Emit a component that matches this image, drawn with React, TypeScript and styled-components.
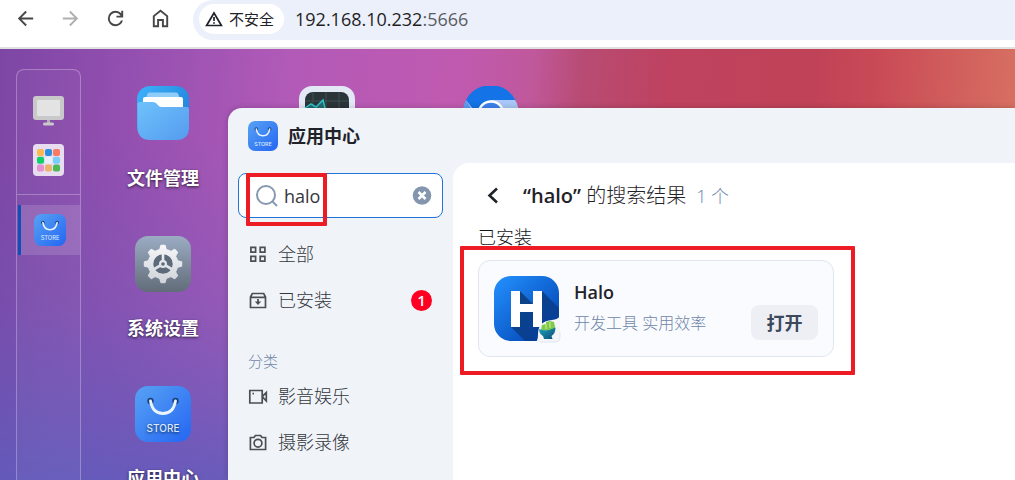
import React, { useState } from "react";
import styled, { createGlobalStyle } from "styled-components";

const GlobalStyle = createGlobalStyle`
  *, *::before, *::after { box-sizing: border-box; }
  body {
    margin: 0;
    color: #1f2329;
    font-family: "Open Sans", "Noto Sans CJK SC", sans-serif;
    font-size: 18px;
    line-height: 24px;
  }
  button, input { font: inherit; color: inherit; }
  button { border: 0; padding: 0; background: none; cursor: pointer; }
  svg { display: block; flex: none; }
`;

const Page = styled.div`
  display: flex;
  flex-direction: column;
  height: 100vh;
  overflow: hidden;
`;

/* Browser toolbar */

const Toolbar = styled.header`
  display: flex;
  align-items: flex-start;
  flex: none;
  height: 49px;
  padding-left: 3px;
  background: #fff;
  border-bottom: 2px solid #dfe2e1;
`;

const ToolButton = styled.button<{ $dim?: boolean }>`
  display: grid;
  place-items: center;
  width: 45px;
  height: 37px;
  color: ${(p) => (p.$dim ? "#b0b0b0" : "#474747")};
`;

const AddressBar = styled.div`
  display: flex;
  align-items: center;
  flex: 1;
  height: 40px;
  margin-left: 10px;
  padding: 0 0 2px 6px;
  gap: 11px;
  background: #ecf0fa;
  border-radius: 20px 0 0 20px;
`;

const SiteChip = styled.button`
  display: flex;
  align-items: center;
  gap: 6px;
  height: 30px;
  padding: 0 10px 0 6px;
  font-size: 15px;
  background: #fff;
  border-radius: 15px;
  white-space: nowrap;
`;

const Url = styled.span`
  color: #1f1f1f;
  span { color: #5a5d63; }
`;

/* Desktop */

const Desktop = styled.main`
  position: relative;
  display: flex;
  flex: 1;
  min-height: 0;
  padding: 20px 0 0 16px;
  overflow: hidden;
  background:
    linear-gradient(180deg, rgba(98, 92, 186, 0) 20%, rgba(98, 92, 186, 0.3) 60%, rgba(94, 92, 188, 0.85) 100%),
    linear-gradient(94deg, #7d46a5 0%, #9450b0 13%, #b25ab8 28%, #c05ab0 44%, #c0589c 51%, #b84b73 56%, #bf4260 64%, #c04257 78%, #c94a56 84%, #d4685f 95%, #da7764 100%);
`;

const Dock = styled.nav`
  display: flex;
  flex-direction: column;
  flex: none;
  width: 65px;
  height: 100%;
  border: 1px solid rgba(255, 255, 255, 0.28);
  border-bottom: 0;
  border-radius: 8px 8px 0 0;
  background: rgba(255, 255, 255, 0.03);
`;

const DockTop = styled.div`
  display: flex;
  flex-direction: column;
  align-items: center;
  gap: 18px;
  padding: 25px 0 18px;
  margin-bottom: 10px;
  border-bottom: 1px solid rgba(255, 255, 255, 0.28);
`;

const DockActive = styled.button`
  display: grid;
  place-items: center;
  height: 50px;
  margin-left: 1px;
  padding-right: 2px;
  border-left: 3px solid #0d50b8;
  background: rgba(255, 255, 255, 0.14);
`;

const Shortcuts = styled.div`
  display: flex;
  padding-top: 17px;
`;

const ShortcutColumn = styled.div`
  width: 164px;
`;

const Shortcut = styled.button`
  display: flex;
  flex-direction: column;
  align-items: center;
  gap: 24px;
  width: 100%;
  height: 150px;
  color: #fff;
  font-weight: 700;
  text-shadow: 0 1px 3px rgba(0, 0, 0, 0.7);
`;

/* Application window */

const Window = styled.section`
  position: absolute;
  top: 59px;
  right: 0;
  bottom: 0;
  left: 228px;
  display: flex;
  flex-direction: column;
  background: #f0f4f9;
  border-radius: 14px 0 0 0;
  box-shadow: 0 0 6px rgba(0, 0, 0, 0.2);
`;

const TitleBar = styled.header`
  display: flex;
  align-items: center;
  gap: 10px;
  height: 55px;
  padding-left: 20px;
`;

const Title = styled.h1`
  margin: 0;
  font-size: 18px;
  font-weight: 700;
`;

const WindowBody = styled.div`
  display: flex;
  flex: 1;
  min-height: 0;
`;

const Sidebar = styled.aside`
  flex: none;
  width: 225px;
  padding: 10px 10px 0;
`;

const SearchBox = styled.label`
  position: relative;
  display: flex;
  align-items: center;
  gap: 6px;
  height: 45px;
  margin-bottom: 13px;
  padding: 0 9px 0 16px;
  background: #fff;
  border: 1px solid #1f74d8;
  border-radius: 8px;
`;

const SearchInput = styled.input`
  flex: 1;
  min-width: 0;
  padding: 0;
  border: 0;
  outline: 0;
  background: none;
  color: #33373d;
`;

const Marker = styled.span`
  position: absolute;
  border: 4px solid #ed1c24;
  border-radius: 1px;
  pointer-events: none;
`;

const SearchMarker = styled(Marker)`
  top: -1px;
  left: 7px;
  width: 81px;
  height: 53px;
`;

const CardMarker = styled(Marker)`
  inset: -15px -22px -19px -19px;
`;

const NavItem = styled.button`
  display: flex;
  align-items: center;
  gap: 10px;
  width: 100%;
  height: 46px;
  padding: 0 11px 0 10px;
  color: #34373c;
  font-weight: 300;
`;

const Badge = styled.span`
  width: 21px;
  height: 21px;
  margin-left: auto;
  border-radius: 50%;
  background: #ff0022;
  color: #fff;
  font-size: 15px;
  font-weight: 600;
  line-height: 21px;
  text-align: center;
`;

const NavHeading = styled.h2`
  margin: 26px 0 0 10px;
  color: #6f86a8;
  font-size: 15px;
  font-weight: 300;
  line-height: 24px;
`;

const Content = styled.div`
  flex: 1;
  min-width: 0;
  padding: 18px 25px 0;
  background: #fff;
  border-radius: 16px 0 0 0;
`;

const ResultHeader = styled.div`
  display: flex;
  align-items: center;
  height: 30px;
  margin-bottom: 14px;
`;

const BackButton = styled.button`
  display: grid;
  place-items: center;
  width: 30px;
  height: 30px;
  margin-right: 15px;
`;

const ResultTitle = styled.h2`
  margin: 0 10px 0 0;
  font-size: 20px;
  font-weight: 300;
  b { font-weight: 600; }
`;

const ResultCount = styled.span`
  color: #7088ac;
  font-weight: 300;
`;

const SectionTitle = styled.h3`
  margin: 0 0 11px;
  color: #111418;
  font-size: 18px;
  font-weight: 300;
`;

const Card = styled.article`
  position: relative;
  display: flex;
  align-items: center;
  gap: 15px;
  width: 356px;
  max-width: 100%;
  padding: 15px;
  background: #fafbfe;
  border: 1px solid #dfe6f0;
  border-radius: 12px;
`;

const CardText = styled.div`
  display: flex;
  flex-direction: column;
  flex: 1;
  gap: 7px;
  padding-bottom: 3px;
  white-space: nowrap;
`;

const AppName = styled.h4`
  margin: 0;
  font-size: 18px;
  font-weight: 600;
`;

const AppTags = styled.p`
  margin: 0;
  color: #6f86a8;
  font-size: 16px;
  font-weight: 300;
`;

const OpenButton = styled.button`
  align-self: flex-end;
  width: 67px;
  height: 35px;
  margin-bottom: 1px;
  border-radius: 8px;
  background: #eeeff4;
  color: #3c485c;
  font-weight: 700;
`;

/* Icons */

const StoreIcon = ({ size }: { size: number }) => (
  <svg width={size} height={size} viewBox="0 0 56 56" aria-hidden="true">
    <defs>
      <linearGradient id={`store${size}`} x1="0" y1="0" x2="1" y2="1">
        <stop offset="0" stopColor="#58a2f4" />
        <stop offset="1" stopColor="#2466f2" />
      </linearGradient>
    </defs>
    <rect width="56" height="56" rx="13" fill={`url(#store${size})`} />
    <circle cx="15.500" cy="15" r="3.200" fill="#17407f" />
    <circle cx="40.500" cy="15" r="3.200" fill="#17407f" />
    <path d="M15.500 15C17 24 22 27.500 28 27.500S39 24 40.500 15" fill="none" stroke="#eaf4ff" strokeWidth="2.800" strokeLinecap="round" />
    <text x="28" y="46" textAnchor="middle" fill="#d9e9ff" fontFamily="Inter, sans-serif" fontSize="10" fontWeight="500">STORE</text>
  </svg>
);

const FolderIcon = () => (
  <svg width="56" height="56" viewBox="0 0 56 56" aria-hidden="true">
    <defs>
      <linearGradient id="folderBack" x1="0" y1="0" x2="1" y2="0.6">
        <stop offset="0" stopColor="#3db2fb" />
        <stop offset="1" stopColor="#2084dc" />
      </linearGradient>
      <linearGradient id="folderFront" x1="0" y1="0" x2="1" y2="1">
        <stop offset="0" stopColor="#6ec2fb" />
        <stop offset="1" stopColor="#559bef" />
      </linearGradient>
    </defs>
    <rect x="2" width="52" height="53" rx="13" fill="url(#folderBack)" />
    <path d="M14 6.500h27q2 0 2.500 2L45 13H11l1-4q.5-2.500 2-2.500z" fill="#8fcdf8" />
    <path d="M10 11h36q2 0 2 2v10H8V13q0-2 2-2z" fill="#fff" />
    <path d="M2.500 18q0-2 2-2H18q2 0 3.500 1.500l2 2.300Q24.500 21 27 21h25q2 0 2 2v18q0 13-13 13H15.500q-13 0-13-13z" fill="url(#folderFront)" />
  </svg>
);

const GearIcon = () => (
  <svg width="56" height="56" viewBox="0 0 56 56" aria-hidden="true">
    <defs>
      <linearGradient id="gearBg" x1="0" y1="0" x2="0" y2="1">
        <stop offset="0" stopColor="#9bacc3" />
        <stop offset="1" stopColor="#626c79" />
      </linearGradient>
      <linearGradient id="gearFg" gradientUnits="userSpaceOnUse" x1="0" y1="9" x2="0" y2="47">
        <stop offset="0" stopColor="#f5f6f8" />
        <stop offset="1" stopColor="#cfd4da" />
      </linearGradient>
      <mask id="gearMask">
        {[0, 45, 90, 135, 180, 225, 270, 315].map((angle) => (
          <path key={angle} d="M23.500 16L25.300 9.500q.2-.7 1-.7h3.400q.8 0 1 .7L32.500 16z" fill="#fff" transform={`rotate(${angle} 28 28)`} />
        ))}
        <circle cx="28" cy="28" r="12.500" fill="none" stroke="#fff" strokeWidth="5.500" />
        {[0, 120, 240].map((angle) => (
          <path key={angle} d="M28 27V16" stroke="#fff" strokeWidth="2.600" transform={`rotate(${angle} 28 28)`} />
        ))}
        <circle cx="28" cy="28" r="4" fill="#fff" />
        <circle cx="28" cy="28" r="1.800" fill="#000" />
      </mask>
    </defs>
    <rect width="56" height="56" rx="13" fill="url(#gearBg)" />
    <circle cx="28" cy="28" r="10" fill="#5d6a7a" />
    <rect width="56" height="56" fill="url(#gearFg)" mask="url(#gearMask)" />
  </svg>
);

const MonitorAppIcon = () => (
  <svg width="56" height="56" viewBox="0 0 56 56" aria-hidden="true">
    <rect width="56" height="56" rx="13" fill="#e3e8f5" />
    <rect x="6" y="6" width="44" height="44" rx="8" fill="#2b3438" />
    <path d="M14 6v44M27 6v44M40 6v44M6 15h44" stroke="#3d5351" />
    <path d="M6 22l6-4 5 3 7-7 3 12V50H6z" fill="#246a70" />
    <path d="M6 22l6-4 5 3 7-7 3 12" fill="none" stroke="#2fc1c9" strokeWidth="1.500" />
  </svg>
);

const BrowserAppIcon = () => (
  <svg width="56" height="56" viewBox="0 0 56 56" aria-hidden="true">
    <circle cx="28" cy="28" r="28" fill="#a9c8f7" />
    <path d="M3 14A28 28 0 0 1 52.500 14H28L14 28z" fill="#1473e6" />
    <path d="M3 14L16 36l-4 14A28 28 0 0 1 3 14z" fill="#5b9cf3" />
    <circle cx="28" cy="28" r="12.500" fill="#3b82ee" stroke="#fff" strokeWidth="2.500" />
  </svg>
);

const ComputerIcon = () => (
  <svg width="31" height="31" viewBox="0 0 31 31" aria-hidden="true">
    <rect y="1" width="31" height="24" rx="3" fill="#c9c9cb" />
    <rect x="4" y="5" width="23" height="16" fill="#e3e3e4" />
    <path d="M14 25h3v3h-3z" fill="#b4b4b8" />
    <rect x="10" y="27.500" width="11" height="3" rx="1.500" fill="#c9c9cb" />
  </svg>
);

const launcherColors = ["#fdb94d", "#2e8ee0", "#f97a62", "#0fce6c", "#e6f0fb", "#78cdfa", "#e691d2", "#ecb36c", "#4cb957"];

const LauncherIcon = () => (
  <svg width="31" height="32" viewBox="0 0 31 32" aria-hidden="true">
    <rect width="31" height="32" rx="4" fill="#e8dcf0" />
    {launcherColors.map((color, i) => (
      <rect key={color} x={4 + (i % 3) * 8} y={5 + Math.floor(i / 3) * 7.700} width="7" height="7" rx="2" fill={color} />
    ))}
  </svg>
);

const HaloIcon = () => (
  <svg width="65" height="65" viewBox="0 0 65 65" overflow="visible" aria-hidden="true">
    <defs>
      <linearGradient id="halo" x1="0" y1="0" x2="1" y2="1">
        <stop offset="0" stopColor="#2492ff" />
        <stop offset="0.85" stopColor="#0448b8" />
      </linearGradient>
      <linearGradient id="haloShade" x1="0" y1="0" x2="1" y2="1">
        <stop offset="0.2" stopColor="#0d4488" />
        <stop offset="1" stopColor="#053c9e" />
      </linearGradient>
      <clipPath id="haloClip">
        <rect width="65" height="65" rx="17" />
      </clipPath>
      <linearGradient id="bowl" x1="0" y1="0" x2="1" y2="1">
        <stop offset="0" stopColor="#20a6b5" />
        <stop offset="1" stopColor="#0b4a78" />
      </linearGradient>
    </defs>
    <g clipPath="url(#haloClip)">
      <rect width="65" height="65" fill="url(#halo)" />
      <path d="M26 15l13 13H26zM48 15l17 17v33H31L17 51l9-15h22z" fill="url(#haloShade)" />
    </g>
    <path d="M17 15h9v13h13V15h9v36h-9V36H26v15h-9z" fill="#fff" />
    <path d="M42 66q2-2 2-8 0-13 14-14 6-.5 8-4V61q0 5-5 5z" fill="#f3f5f9" />
    <path d="M66 56v5q0 5-5 5H46" fill="none" stroke="#e3e6ec" />
    <path d="M47 54l1-5 4-1v-2l4-1 4 1 1 5v3z" fill="#7cc850" />
    <path d="M52 48v5M56 46v6" stroke="#b9e56a" strokeWidth="1.500" />
    <path d="M45 53q8 3 16.500-1.500 0 6-4 8.500l1 3H50l-1-3q-4-2-4-7z" fill="url(#bowl)" />
  </svg>
);

const BackArrow = "M20 11H7.830l5.590-5.590L12 4l-8 8 8 8 1.410-1.410L7.830 13H20z";

const ArrowIcon = ({ forward }: { forward?: boolean }) => (
  <svg width="23" height="23" viewBox="0 0 24 24" fill="currentColor" aria-hidden="true">
    <path d={BackArrow} transform={forward ? "rotate(180 12 12)" : undefined} />
  </svg>
);

const ReloadIcon = () => (
  <svg width="23" height="23" viewBox="0 0 24 24" fill="currentColor" aria-hidden="true">
    <path d="M12 20q-3.350 0-5.675-2.325T4 12t2.325-5.675T12 4q1.725 0 3.300.7125T18 6.750V4h2v7h-7V9h4.200q-.8-1.400-2.187-2.200T12 6Q9.500 6 7.750 7.750T6 12t1.750 4.250T12 18q1.925 0 3.475-1.100T17.650 14h2.100q-.7 2.650-2.850 4.325T12 20z" />
  </svg>
);

const HomeIcon = () => (
  <svg width="23" height="23" viewBox="0 0 24 24" fill="none" stroke="currentColor" strokeWidth="2" aria-hidden="true">
    <path d="M5 20V9.500L12 4l7 5.500V20h-4.500v-6.500h-5V20z" />
  </svg>
);

const WarningIcon = () => (
  <svg width="18" height="16" viewBox="0 0 18 16" fill="none" stroke="currentColor" strokeWidth="1.700" aria-hidden="true">
    <path d="M9 2L16.400 14.500H1.600z" />
    <path d="M9 6v4M9 11.200v1.600" />
  </svg>
);

const SearchIcon = () => (
  <svg width="23" height="23" viewBox="0 0 23 23" fill="none" stroke="#8799b1" strokeWidth="2" aria-hidden="true">
    <circle cx="11" cy="11" r="9" />
    <path d="M17 17l5 5" />
  </svg>
);

const ClearIcon = () => (
  <svg width="22" height="22" viewBox="0 0 22 22" aria-hidden="true">
    <circle cx="11" cy="10.500" r="9.300" fill="#8496ae" />
    <path d="M7.500 7l7 7M14.500 7l-7 7" stroke="#fff" strokeWidth="2.500" />
  </svg>
);

const NavIcon = ({ children }: { children: React.ReactNode }) => (
  <svg width="20" height="20" viewBox="0 0 20 20" fill="none" stroke="#4b4e54" strokeWidth="1.700" aria-hidden="true">
    {children}
  </svg>
);

const AllIcon = () => (
  <NavIcon>
    <path d="M2.900 3.400h4.700v4.700H2.900zM12.200 3.400h4.700v4.700h-4.700zM2.900 12.400h4.700v4.700H2.900zM12.200 12.400h4.700v4.700h-4.700z" />
  </NavIcon>
);

const InstalledIcon = () => (
  <NavIcon>
    <path d="M2.500 7L4.300 3.500h11.400L17.500 7V17.500h-15zM2.500 7.300h15M10 9v4.500" />
    <path d="M6.800 11.500h6.400L10 15z" fill="#4b4e54" stroke="none" />
  </NavIcon>
);

const VideoIcon = () => (
  <NavIcon>
    <path d="M1.800 4.500h12.400V17H1.800zM14.200 10.700l4.100-4.200V15z" />
    <path d="M4.500 7.700h1.500" />
  </NavIcon>
);

const CameraIcon = () => (
  <NavIcon>
    <path d="M2.400 5.500H6l1.400-2h5.200l1.400 2h3.600v12H2.400z" />
    <circle cx="10" cy="11.200" r="3.900" />
  </NavIcon>
);

const ChevronIcon = () => (
  <svg width="16" height="18" viewBox="0 0 16 18" fill="none" stroke="#1f2329" strokeWidth="2.600" aria-hidden="true">
    <path d="M12 1.500L4.500 8.500l7.500 7" />
  </svg>
);

export default function App() {
  const [query, setQuery] = useState("halo");

  return (
    <>
      <GlobalStyle />
      <Page>
        <Toolbar>
          <ToolButton aria-label="后退"><ArrowIcon /></ToolButton>
          <ToolButton aria-label="前进" $dim><ArrowIcon forward /></ToolButton>
          <ToolButton aria-label="刷新"><ReloadIcon /></ToolButton>
          <ToolButton aria-label="主页"><HomeIcon /></ToolButton>
          <AddressBar>
            <SiteChip><WarningIcon />不安全</SiteChip>
            <Url>192.168.10.232<span>:5666</span></Url>
          </AddressBar>
        </Toolbar>

        <Desktop>
          <Dock>
            <DockTop>
              <button aria-label="桌面"><ComputerIcon /></button>
              <button aria-label="启动器"><LauncherIcon /></button>
            </DockTop>
            <DockActive aria-label="应用中心"><StoreIcon size={32} /></DockActive>
          </Dock>

          <Shortcuts>
            <ShortcutColumn>
              <Shortcut><FolderIcon />文件管理</Shortcut>
              <Shortcut><GearIcon />系统设置</Shortcut>
              <Shortcut><StoreIcon size={56} />应用中心</Shortcut>
            </ShortcutColumn>
            <ShortcutColumn>
              <Shortcut aria-label="资源监控"><MonitorAppIcon /></Shortcut>
            </ShortcutColumn>
            <ShortcutColumn>
              <Shortcut aria-label="浏览器"><BrowserAppIcon /></Shortcut>
            </ShortcutColumn>
          </Shortcuts>

          <Window>
            <TitleBar>
              <StoreIcon size={30} />
              <Title>应用中心</Title>
            </TitleBar>
            <WindowBody>
              <Sidebar>
                <SearchBox>
                  <SearchIcon />
                  <SearchInput aria-label="搜索" value={query} onChange={(e) => setQuery(e.target.value)} />
                  <button aria-label="清除" onClick={() => setQuery("")}><ClearIcon /></button>
                  <SearchMarker />
                </SearchBox>
                <NavItem><AllIcon />全部</NavItem>
                <NavItem><InstalledIcon />已安装<Badge>1</Badge></NavItem>
                <NavHeading>分类</NavHeading>
                <NavItem><VideoIcon />影音娱乐</NavItem>
                <NavItem><CameraIcon />摄影录像</NavItem>
              </Sidebar>
              <Content>
                <ResultHeader>
                  <BackButton aria-label="返回"><ChevronIcon /></BackButton>
                  <ResultTitle><b>“halo”</b> 的搜索结果</ResultTitle>
                  <ResultCount>1 个</ResultCount>
                </ResultHeader>
                <SectionTitle>已安装</SectionTitle>
                <Card>
                  <HaloIcon />
                  <CardText>
                    <AppName>Halo</AppName>
                    <AppTags>开发工具 实用效率</AppTags>
                  </CardText>
                  <OpenButton>打开</OpenButton>
                  <CardMarker />
                </Card>
              </Content>
            </WindowBody>
          </Window>
        </Desktop>
      </Page>
    </>
  );
}
